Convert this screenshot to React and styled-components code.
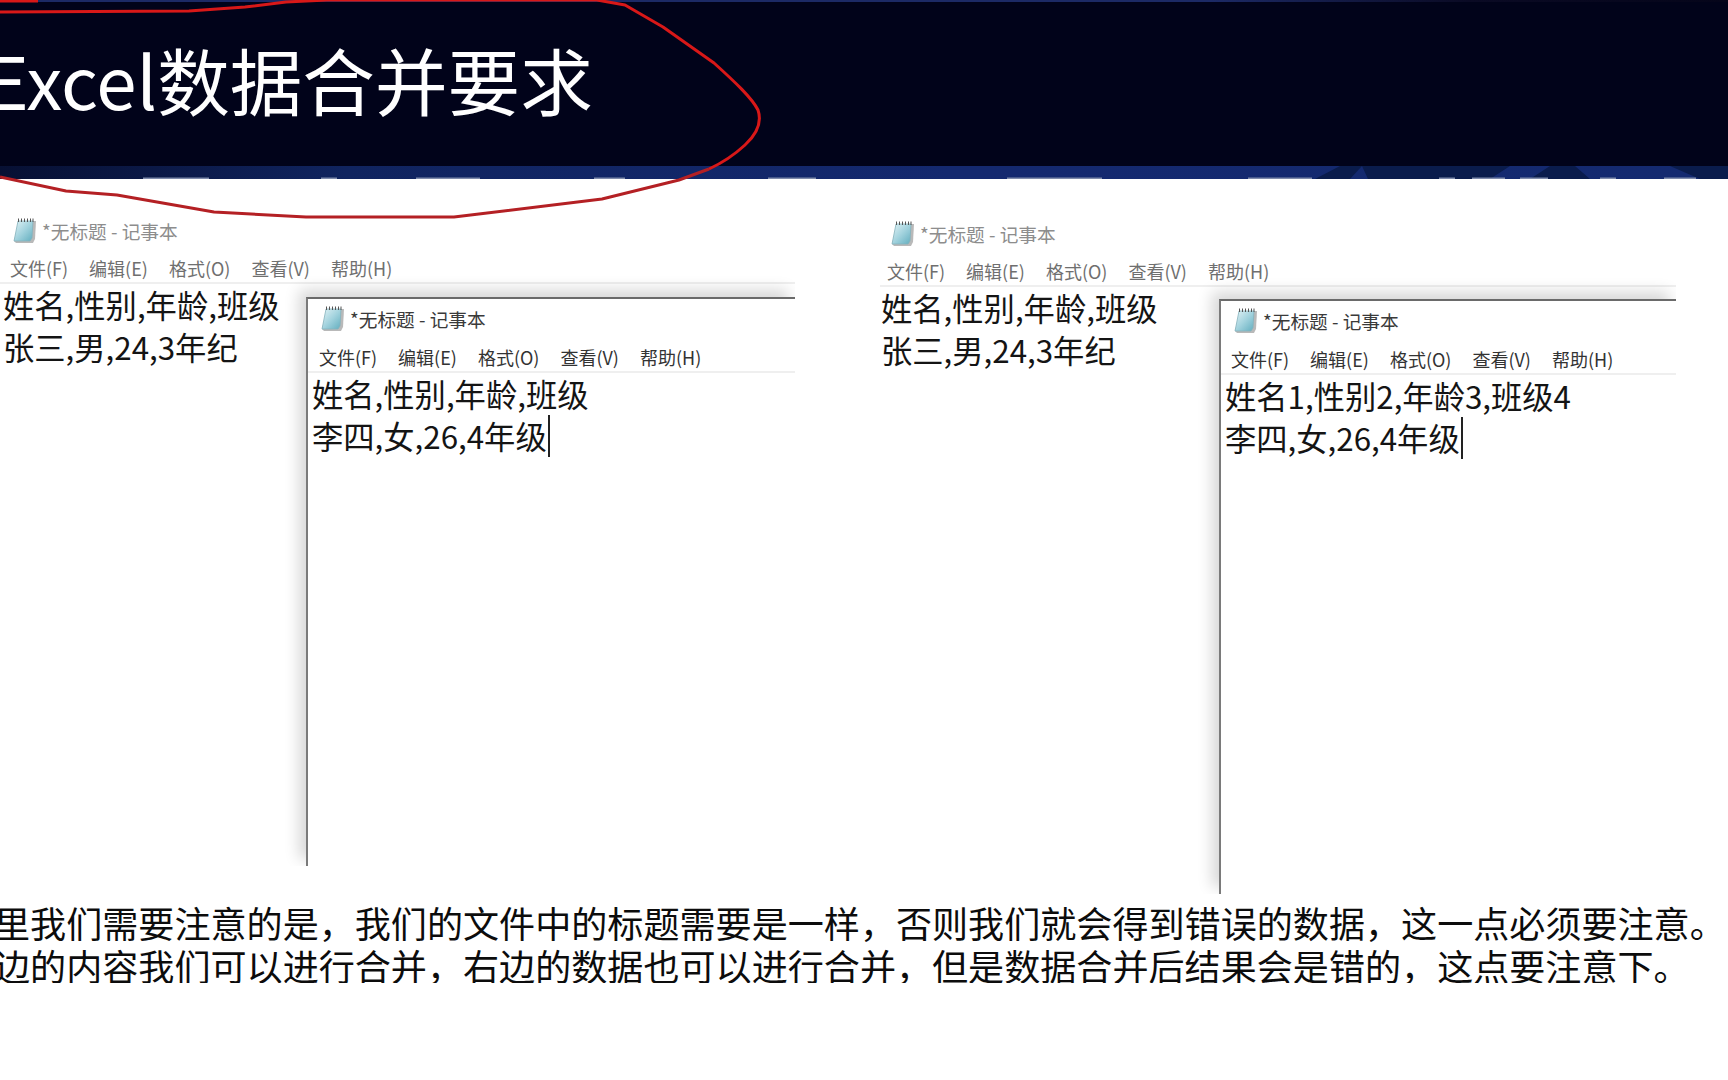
import React from 'react';
import styled, { createGlobalStyle } from 'styled-components';

const CJK = '"Noto Sans CJK SC", "Liberation Sans", sans-serif';

const GlobalStyle = createGlobalStyle`
  html, body {
    margin: 0;
    padding: 0;
    background: #fff;
  }
`;

const Slide = styled.div`
  position: relative;
  width: 1728px;
  height: 1080px;
  overflow: hidden;
  background: #fff;
  font-family: ${CJK};
  color: #111;
`;

const Header = styled.header`
  height: 179px;
  display: flex;
  flex-direction: column;
  background: #01031a;
`;

const TopLine = styled.div`
  height: 2px;
  background: linear-gradient(90deg, #1c2a66 0%, #1c2a66 70%, #0a0a24 85%, #05051a 100%);
`;

const TitleArea = styled.div`
  flex: 1;
  display: flex;
  align-items: center;
  padding-bottom: 9px;
`;

const Title = styled.h1`
  margin: 0 0 0 -14px;
  font-size: 72.6px;
  line-height: 1;
  font-weight: 400;
  color: #fff;
  white-space: nowrap;
`;

const Band = styled.svg`
  display: block;
  flex: none;
`;

const Shots = styled.section`
  display: flex;
  align-items: flex-start;
  gap: 85px;
  height: 722px;
  padding-top: 39px;
  box-sizing: border-box;
`;

const Panel = styled.div`
  position: relative;
  flex: none;
  width: ${p => p.$width}px;
  height: ${p => p.$height}px;
  margin-top: ${p => p.$offset || 0}px;
  overflow: hidden;
  background: #fff;
`;

const TitleBar = styled.div`
  display: flex;
  align-items: center;
  gap: 5px;
  height: 24px;
  margin-top: ${p => p.$active ? 7 : 0}px;
  padding-left: ${p => p.$inset}px;
  font-size: 18.7px;
  color: ${p => p.$active ? '#3a3a3a' : '#8d8d8d'};
`;

const MenuBar = styled.nav`
  display: flex;
  gap: 21px;
  height: 28px;
  align-items: center;
  margin-top: ${p => p.$active ? 13 : 12}px;
  padding-left: ${p => p.$inset}px;
  border-bottom: 2px solid #efefef;
  font-size: 18px;
  color: ${p => p.$active ? '#333' : '#6f6f6f'};
`;

const MenuItem = styled.span`
  white-space: nowrap;
`;

const Editor = styled.div`
  padding-left: ${p => p.$inset}px;
  font-size: 31.3px;
  line-height: 42px;
  color: #141414;
  white-space: nowrap;
`;

const Caret = styled.span`
  display: inline-block;
  width: 2px;
  height: 42px;
  margin-left: 1px;
  vertical-align: top;
  background: #222;
`;

const FrontWindow = styled.div`
  position: absolute;
  top: ${p => p.$top}px;
  left: ${p => p.$left}px;
  right: 0;
  bottom: 0;
  background: #fff;
  border-top: 2px solid #6a6a6a;
  border-left: 2px solid #7a7a7a;
  box-shadow: -7px -7px 14px rgba(0, 0, 0, 0.16);
`;

const Caption = styled.p`
  height: 82px;
  margin: 0 0 0 -6px;
  overflow: hidden;
  font-size: 36.1px;
  line-height: 43px;
  color: #0c0c0c;
  white-space: nowrap;
`;

const Annotation = styled.svg`
  position: absolute;
  top: 0;
  left: 0;
  pointer-events: none;
`;

const MENU = ['文件(F)', '编辑(E)', '格式(O)', '查看(V)', '帮助(H)'];

// x, width of the small grey marks on the lower edge of the band
const BAND_TICKS = [
  [143, 66], [321, 16], [416, 64], [594, 31], [768, 48], [1007, 95],
  [1248, 64], [1439, 16], [1472, 33], [1520, 28], [1600, 16], [1664, 32],
];

const HeaderBand = () => (
  <Band width="1728" height="13" viewBox="0 0 1728 13">
    <defs>
      <linearGradient id="bandFill" x1="0" y1="0" x2="1" y2="0">
        <stop offset="0" stopColor="#071033" />
        <stop offset="0.2" stopColor="#10245f" />
        <stop offset="0.55" stopColor="#14296f" />
        <stop offset="1" stopColor="#142a70" />
      </linearGradient>
    </defs>
    <rect width="1728" height="13" fill="url(#bandFill)" />
    <path d="M1315 13L1340 0H1728V13H1700L1670 0L1575 0L1590 13H1530L1550 0H1510L1490 13H1368L1362 0L1350 13Z" fill="#0a1c4c" />
    {BAND_TICKS.map(([x, w]) => (
      <rect key={x} x={x} y="11.5" width={w} height="1.5" fill="#7f8bab" />
    ))}
  </Band>
);

const NotepadIcon = () => (
  <svg width="26" height="27" viewBox="0 0 26 27">
    <defs>
      <linearGradient id="page" x1="0" y1="0" x2="1" y2="1">
        <stop offset="0" stopColor="#e2f2f5" />
        <stop offset="0.5" stopColor="#a3d3de" />
        <stop offset="1" stopColor="#62aebf" />
      </linearGradient>
    </defs>
    <path d="M8 4H25L24 22L22 26H5L3 24Z" fill="#8a8a8a" opacity="0.6" />
    <path d="M7 4H22L21 21L19 24H3Z" fill="url(#page)" stroke="#86b2bc" strokeWidth="0.8" />
    <path d="M7.5 1.5v3.5M10.5 1.5v3.5M13.5 1.5v3.5M16.5 1.5v3.5M19.5 1.5v3.5M22 1.5v3.5" stroke="#555" strokeWidth="1" />
  </svg>
);

const Notepad = ({ active, inset, menuInset, textInset, lines, caret }) => (
  <>
    <TitleBar $inset={inset} $active={active}>
      <NotepadIcon />
      <span>*无标题 - 记事本</span>
    </TitleBar>
    <MenuBar $inset={menuInset} $active={active}>
      {MENU.map(m => <MenuItem key={m}>{m}</MenuItem>)}
    </MenuBar>
    <Editor $inset={textInset}>
      {lines.map((line, i) => (
        <div key={line}>
          {line}
          {caret && i === lines.length - 1 && <Caret />}
        </div>
      ))}
    </Editor>
  </>
);

export default function App() {
  return (
    <Slide>
      <GlobalStyle />
      <Header>
        <TopLine />
        <TitleArea>
          <Title>Excel数据合并要求</Title>
        </TitleArea>
        <HeaderBand />
      </Header>

      <Shots>
        <Panel $width={795} $height={648}>
          <Notepad inset={11} menuInset={10} textInset={3}
            lines={['姓名,性别,年龄,班级', '张三,男,24,3年纪']} />
          <FrontWindow $top={79} $left={306}>
            <Notepad active inset={11} menuInset={11} textInset={4} caret
              lines={['姓名,性别,年龄,班级', '李四,女,26,4年级']} />
          </FrontWindow>
        </Panel>
        <Panel $width={796} $height={673} $offset={3}>
          <Notepad inset={9} menuInset={7} textInset={1}
            lines={['姓名,性别,年龄,班级', '张三,男,24,3年纪']} />
          <FrontWindow $top={78} $left={339}>
            <Notepad active inset={11} menuInset={10} textInset={4} caret
              lines={['姓名1,性别2,年龄3,班级4', '李四,女,26,4年级']} />
          </FrontWindow>
        </Panel>
      </Shots>

      <Caption>
        里我们需要注意的是，我们的文件中的标题需要是一样，否则我们就会得到错误的数据，这一点必须要注意。<br />
        边的内容我们可以进行合并，右边的数据也可以进行合并，但是数据合并后结果会是错的，这点要注意下。
      </Caption>

      <Annotation width="1728" height="1080" viewBox="0 0 1728 1080">
        <path d="M0 1H38" fill="none" stroke="#d81818" strokeWidth="3" />
        <path d="M0 12L189 11L245 7L286 2L327 0L597 0L625 5L663 27L714 63C735 82 752 98 758 110C762 122 757 134 745 145C732 157 722 163 709 169"
          fill="none" stroke="#d81818" strokeWidth="3" strokeLinejoin="round" />
        <path d="M709 169L679 180L602 199L454 217L306 217L214 212L117 195L66 191L0 177"
          fill="none" stroke="#b42024" strokeWidth="3" strokeLinejoin="round" />
      </Annotation>
    </Slide>
  );
}
